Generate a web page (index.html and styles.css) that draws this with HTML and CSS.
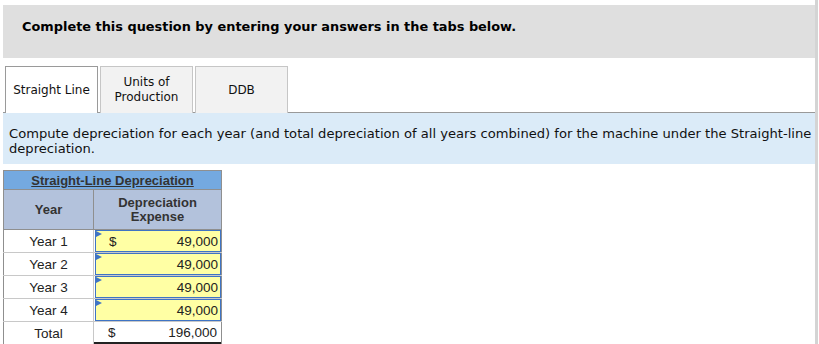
FILE: index.html
```html
<!DOCTYPE html>
<html>
<head>
<meta charset="utf-8">
<link rel="stylesheet" href="styles.css">
</head>
<body>
<div class="page">
  <div class="banner">Complete this question by entering your answers in the tabs below.</div>
  <div class="tabs">
    <div class="tab active">Straight Line</div>
    <div class="tab">Units of<br>Production</div>
    <div class="tab">DDB</div>
  </div>
  <div class="prompt">Compute depreciation for each year (and total depreciation of all years combined) for the machine under the Straight-line depreciation.</div>
  <table class="dep">
    <tr><th class="title" colspan="2"><u>Straight-Line Depreciation</u></th></tr>
    <tr class="head"><th class="c1">Year</th><th class="c2">Depreciation<br>Expense</th></tr>
    <tr><td class="c1">Year 1</td><td class="c2"><div class="inp"><span class="cur">$</span><span>49,000</span></div></td></tr>
    <tr><td class="c1">Year 2</td><td class="c2"><div class="inp"><span class="cur"></span><span>49,000</span></div></td></tr>
    <tr><td class="c1">Year 3</td><td class="c2"><div class="inp"><span class="cur"></span><span>49,000</span></div></td></tr>
    <tr><td class="c1">Year 4</td><td class="c2"><div class="inp"><span class="cur"></span><span>49,000</span></div></td></tr>
    <tr class="total"><td class="c1">Total</td><td class="c2"><div class="tot"><span class="cur">$</span><span>196,000</span></div></td></tr>
  </table>
</div>
</body>
</html>
```
FILE: styles.css
```css
html, body { margin: 0; padding: 0; background: #fff; }
body { width: 819px; height: 344px; overflow: hidden; font-family: "DejaVu Sans", Verdana, sans-serif; color: #111; }
.page { width: 812px; padding: 5px 0 0 3px; border-right: 3px solid #d4d4d4; height: 339px; }
.banner { background: #dfdfdf; height: 53px; box-sizing: border-box; padding: 14px 0 0 19px; font-weight: bold; font-size: 12.9px; line-height: 16px; color: #000; }
.tabs { display: flex; gap: 2px; margin-top: 8px; padding-left: 2px; border-bottom: 1px solid #999; height: 46px; }
.tab { width: 93px; height: 47px; box-sizing: border-box; border: 1px solid #c6c6c6; border-bottom: none; background: #f2f2f2; display: flex; align-items: center; justify-content: center; text-align: center; font-size: 12px; line-height: 15px; color: #111; }
.tab.active { background: #fff; border-color: #9a9a9a; position: relative; z-index: 1; }
.prompt { background: #dbebf8; padding: 13px 2px 8px 6px; font-size: 13.1px; line-height: 15px; color: #111; }
.dep { margin-top: 6px; border-collapse: collapse; width: 219px; font-family: "Liberation Sans", Arial, sans-serif; font-size: 13.5px; color: #222; }
.dep th, .dep td { padding: 0; border: 1px solid #8f8f8f; }
.dep .title { background: #74a9e0; height: 18px; font-weight: bold; color: #333; font-size: 13px; }
.dep .head th { background: #b3c2dc; height: 39px; font-weight: bold; color: #333; line-height: 14px; font-size: 13px; }
.dep .c1 { width: 89px; text-align: center; }
.dep td { height: 22px; border-color: #c8c8c8; border-left-color: #8f8f8f; }
.dep td.c2 { border-right-color: #8f8f8f; }
.inp { position: relative; display: flex; justify-content: space-between; align-items: center; height: 20px; margin: 0 0 0 1px; border: 1px solid #3f74c4; background: #ffffa4; padding: 0 2px 0 13px; }
.inp::before { content: ""; position: absolute; left: 0; top: 0; border-style: solid; border-width: 3px 0 3px 6px; border-color: transparent transparent transparent #3f74c4; }
.tot { display: flex; justify-content: space-between; align-items: center; height: 20px; padding: 0 4px 0 14px; border-bottom: 2px solid #222; }
```
